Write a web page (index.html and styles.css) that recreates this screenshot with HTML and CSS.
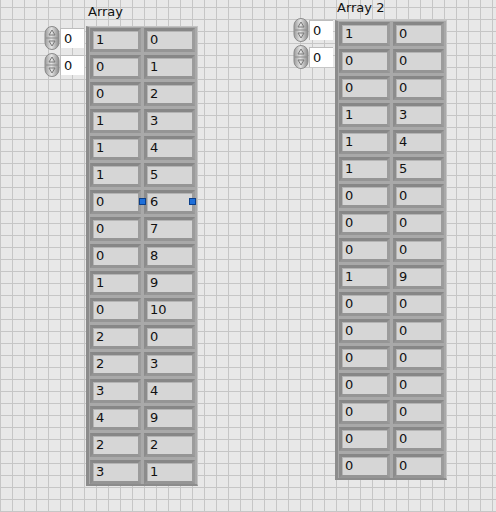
FILE: index.html
```html
<!DOCTYPE html>
<html>
<head>
<meta charset="utf-8">
<link rel="stylesheet" href="styles.css">
</head>
<body>
<div class="panel">
  <div class="ctl ctl-a">
    <div class="label">Array</div>
    <div class="body">
      <div class="indices">
        <div class="index"><svg class="spin" viewBox="0 0 16 24" width="16" height="24"><defs><linearGradient id="g1" x1="0" x2="1" y1="0" y2="0"><stop offset="0" stop-color="#9a9a9a"/><stop offset="0.45" stop-color="#e4e4e4"/><stop offset="1" stop-color="#8a8a8a"/></linearGradient></defs><rect x="1" y="0.5" width="14" height="23" rx="7" fill="url(#g1)" stroke="#8a8a8a"/><line x1="2" y1="12" x2="14" y2="12" stroke="#8a8a8a"/><path d="M5 9 L8 4 L11 9 Z" fill="none" stroke="#7a7a7a"/><path d="M5 15 L8 20 L11 15 Z" fill="none" stroke="#7a7a7a"/></svg><div class="num">0</div></div>
        <div class="index"><svg class="spin" viewBox="0 0 16 24" width="16" height="24"><rect x="1" y="0.5" width="14" height="23" rx="7" fill="url(#g1)" stroke="#8a8a8a"/><line x1="2" y1="12" x2="14" y2="12" stroke="#8a8a8a"/><path d="M5 9 L8 4 L11 9 Z" fill="none" stroke="#7a7a7a"/><path d="M5 15 L8 20 L11 15 Z" fill="none" stroke="#7a7a7a"/></svg><div class="num">0</div></div>
      </div>
      <div class="frame" id="fa"></div>
    </div>
  </div>
  <div class="ctl ctl-b">
    <div class="label">Array 2</div>
    <div class="body">
      <div class="indices">
        <div class="index"><svg class="spin" viewBox="0 0 16 24" width="16" height="24"><rect x="1" y="0.5" width="14" height="23" rx="7" fill="url(#g1)" stroke="#8a8a8a"/><line x1="2" y1="12" x2="14" y2="12" stroke="#8a8a8a"/><path d="M5 9 L8 4 L11 9 Z" fill="none" stroke="#7a7a7a"/><path d="M5 15 L8 20 L11 15 Z" fill="none" stroke="#7a7a7a"/></svg><div class="num">0</div></div>
        <div class="index"><svg class="spin" viewBox="0 0 16 24" width="16" height="24"><rect x="1" y="0.5" width="14" height="23" rx="7" fill="url(#g1)" stroke="#8a8a8a"/><line x1="2" y1="12" x2="14" y2="12" stroke="#8a8a8a"/><path d="M5 9 L8 4 L11 9 Z" fill="none" stroke="#7a7a7a"/><path d="M5 15 L8 20 L11 15 Z" fill="none" stroke="#7a7a7a"/></svg><div class="num">0</div></div>
      </div>
      <div class="frame" id="fb"></div>
    </div>
  </div>
</div>
<script>
var a=[[1,0],[0,1],[0,2],[1,3],[1,4],[1,5],[0,6],[0,7],[0,8],[1,9],[0,10],[2,0],[2,3],[3,4],[4,9],[2,2],[3,1]];
var b=[[1,0],[0,0],[0,0],[1,3],[1,4],[1,5],[0,0],[0,0],[0,0],[1,9],[0,0],[0,0],[0,0],[0,0],[0,0],[0,0],[0,0]];
function fill(id,d,sel){var f=document.getElementById(id);d.forEach(function(r,i){r.forEach(function(v,j){var c=document.createElement('div');c.className='cell';c.textContent=v;if(sel&&i===6&&j===1){c.className+=' sel';}f.appendChild(c);});});}
fill('fa',a,true);fill('fb',b,false);
</script>
</body>
</html>
```
FILE: styles.css
```css
html, body {
  margin: 0;
  padding: 0;
}
body {
  width: 496px;
  height: 512px;
  overflow: hidden;
  background-color: #e8e8e8;
  background-image:
    linear-gradient(to right, #c6c6c6 1px, transparent 1px),
    linear-gradient(to bottom, #c6c6c6 1px, transparent 1px);
  background-size: 12px 12px, 12px 12px;
  background-position: 0 0, 0 7px;
  font-family: "DejaVu Sans", "Liberation Sans", sans-serif;
  font-size: 13px;
  color: #111;
}
.panel {
  position: relative;
  width: 496px;
  height: 512px;
}
.ctl {
  position: absolute;
  display: flex;
  flex-direction: column;
}
.ctl-a { left: 44px; top: 4px; }
.ctl-b { left: 293px; top: 0px; }
.label {
  margin-left: 44px;
  height: 16px;
  line-height: 16px;
}
.ctl-a .label { margin-bottom: 6px; }
.ctl-b .label { margin-bottom: 3px; }
.body {
  display: flex;
  align-items: flex-start;
}
.indices {
  display: flex;
  flex-direction: column;
  gap: 3px;
  width: 42px;
}
.ctl-b .indices { margin-top: -1px; }
.index {
  display: flex;
  align-items: center;
  height: 24px;
}
.spin { display: block; }
.num {
  width: 24px;
  height: 20px;
  line-height: 20px;
  background: #fff;
  border-top: 1px solid #bdbdbd;
  border-left: 1px solid #bdbdbd;
  box-sizing: border-box;
  padding-left: 3px;
}
.frame {
  position: relative;
  box-sizing: border-box;
  width: 112px;
  display: grid;
  grid-template-columns: 51px 51px;
  grid-auto-rows: 24px;
  gap: 3px 3px;
  padding: 1px 2px 0 1px;
  background: #a9a9a9;
  border-top: 1px solid #c2c2c2;
  border-right: 1px solid #c4c4c4;
  border-left: 3px solid #8c8c8c;
  border-bottom: 2px solid #8c8c8c;
}
.ctl-b .frame { margin-top: 1px; }
.cell {
  position: relative;
  box-sizing: border-box;
  background: #d6d6d6;
  border-style: solid;
  border-width: 3px;
  border-color: #878787 #9c9c9c #959595 #8c8c8c;
  box-shadow: inset 1px 1px 0 #b4b4b4;
  padding-left: 3px;
  line-height: 18px;
}
.sel::before, .sel::after {
  content: "";
  position: absolute;
  top: 5px;
  width: 5px;
  height: 5px;
  background: #1e6fd9;
  border: 1px solid #0b3f8a;
}
.sel::before { left: -8px; }
.sel::after { right: -4px; }
```
